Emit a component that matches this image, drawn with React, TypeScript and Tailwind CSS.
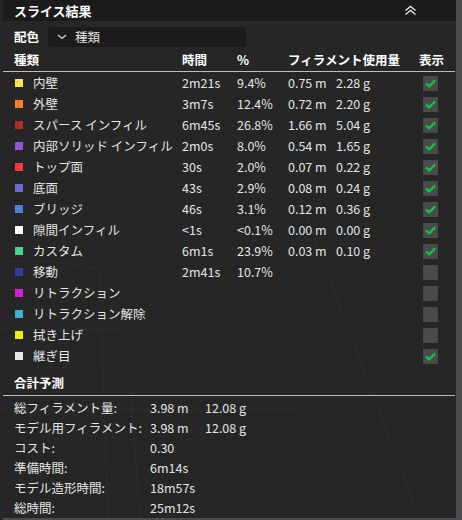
import React from "react";

type Row = { name: string; color: string; time?: string; pct?: string; m?: string; g?: string; on: boolean };

const rows: Row[] = [
  { name: "内壁", color: "#ffe14a", time: "2m21s", pct: "9.4%", m: "0.75 m", g: "2.28 g", on: true },
  { name: "外壁", color: "#ff7b2e", time: "3m7s", pct: "12.4%", m: "0.72 m", g: "2.20 g", on: true },
  { name: "スパース インフィル", color: "#b02a28", time: "6m45s", pct: "26.8%", m: "1.66 m", g: "5.04 g", on: true },
  { name: "内部ソリッド インフィル", color: "#9650d8", time: "2m0s", pct: "8.0%", m: "0.54 m", g: "1.65 g", on: true },
  { name: "トップ面", color: "#f0393a", time: "30s", pct: "2.0%", m: "0.07 m", g: "0.22 g", on: true },
  { name: "底面", color: "#6a6ad2", time: "43s", pct: "2.9%", m: "0.08 m", g: "0.24 g", on: true },
  { name: "ブリッジ", color: "#4f7fd6", time: "46s", pct: "3.1%", m: "0.12 m", g: "0.36 g", on: true },
  { name: "隙間インフィル", color: "#ffffff", time: "<1s", pct: "<0.1%", m: "0.00 m", g: "0.00 g", on: true },
  { name: "カスタム", color: "#4ed08c", time: "6m1s", pct: "23.9%", m: "0.03 m", g: "0.10 g", on: true },
  { name: "移動", color: "#2e3f9c", time: "2m41s", pct: "10.7%", on: false },
  { name: "リトラクション", color: "#d21fd4", on: false },
  { name: "リトラクション解除", color: "#3fb0d8", on: false },
  { name: "拭き上げ", color: "#f2f000", on: false },
  { name: "継ぎ目", color: "#e6e6e6", on: true },
];

const summary = [
  { label: "総フィラメント量:", a: "3.98 m", b: "12.08 g" },
  { label: "モデル用フィラメント:", a: "3.98 m", b: "12.08 g" },
  { label: "コスト:", a: "0.30" },
  { label: "準備時間:", a: "6m14s" },
  { label: "モデル造形時間:", a: "18m57s" },
  { label: "総時間:", a: "25m12s" },
];

function Check({ on }: { on: boolean }) {
  return (
    <div className="w-[15px] h-[15px] bg-[#4a4a4a] flex items-center justify-center">
      {on && (
        <svg width="11" height="9" viewBox="0 0 11 9">
          <path d="M1 4.4 L4.2 7.4 L10.2 1.2" fill="none" stroke="#14c24a" strokeWidth="2.3" />
        </svg>
      )}
    </div>
  );
}

export default function App() {
  return (
    <div
      className="relative w-[462px] h-[520px] overflow-hidden bg-[#262626] text-[#e4e4e4] text-[12.5px]"
      style={{ fontFamily: '"Noto Sans CJK JP", "Noto Sans", sans-serif' }}
    >
      <svg className="absolute inset-0 pointer-events-none" width="462" height="520">
        <g stroke="#2e2e2e" strokeWidth="1" fill="none">
          <path d="M0 262 Q60 258 100 270 L108 520" />
          <path d="M0 290 Q70 285 110 300" />
          <path d="M0 330 L120 330" />
          <path d="M0 368 L180 368" />
          <path d="M0 410 L300 410" />
          <path d="M130 380 L140 520" />
          <path d="M300 200 L420 520" />
        </g>
      </svg>
      <div className="relative flex h-full">
        <div className="flex-1 flex flex-col pl-[3px]">
          <div className="h-[22px] bg-[#1b1b1b] flex items-center justify-between pl-[11px] pr-[39px]">
            <span className="text-[13px] font-bold text-white leading-none">スライス結果</span>
            <svg width="13" height="11" viewBox="0 0 13 11">
              <path d="M1.5 5.5 L6.5 1.5 L11.5 5.5 M1.5 9.5 L6.5 5.5 L11.5 9.5" fill="none" stroke="#e0e0e0" strokeWidth="1.5" />
            </svg>
          </div>
          <div className="flex items-center h-[26px] mt-[3px] pl-[11px]">
            <span className="font-bold text-white w-[34px]">配色</span>
            <div className="w-[198px] h-[20px] rounded-[3px] bg-[#1b1b1b] flex items-center pl-[9px]">
              <svg width="10" height="6" viewBox="0 0 10 6">
                <path d="M1 1 L5 4.5 L9 1" fill="none" stroke="#d8d8d8" strokeWidth="1.2" />
              </svg>
              <span className="ml-[8px] text-[#e0e0e0]">種類</span>
            </div>
          </div>
          <div className="flex items-center h-[22px] font-bold text-white pl-[11px]">
            <span className="w-[168px]">種類</span>
            <span className="w-[55px]">時間</span>
            <span className="w-[51px]">%</span>
            <span className="w-[131px] whitespace-nowrap">フィラメント使用量</span>
            <span>表示</span>
          </div>
          <div className="h-px bg-[#bdbdbd] mr-[1px]" />
          <div className="flex flex-col mt-[1px]">
            {rows.map((r) => (
              <div key={r.name} className="flex items-center h-[21px] pl-[12px]">
                <div className="w-[8px] h-[8px]" style={{ backgroundColor: r.color }} />
                <span className="w-[159px] pl-[10px] whitespace-nowrap">{r.name}</span>
                <span className="w-[55px]">{r.time}</span>
                <span className="w-[51px]">{r.pct}</span>
                <span className="w-[48px] whitespace-nowrap">{r.m}</span>
                <span className="w-[87px]">{r.g}</span>
                <Check on={r.on} />
              </div>
            ))}
          </div>
          <div className="flex items-center h-[24px] mt-[5px] pl-[11px] font-bold text-white">合計予測</div>
          <div className="h-px bg-[#bdbdbd] mr-[1px]" />
          <div className="flex flex-col mt-[2px]">
            {summary.map((s) => (
              <div key={s.label} className="flex items-center h-[20px] pl-[11px]">
                <span className="w-[136px] whitespace-nowrap">{s.label}</span>
                <span className="w-[55px]">{s.a}</span>
                <span>{s.b}</span>
              </div>
            ))}
          </div>
          <div className="flex-1" />
          <div className="h-[2px] bg-[#4b4b50]" />
        </div>
        <div className="w-[6px] bg-[#4b4b50]" />
      </div>
    </div>
  );
}
